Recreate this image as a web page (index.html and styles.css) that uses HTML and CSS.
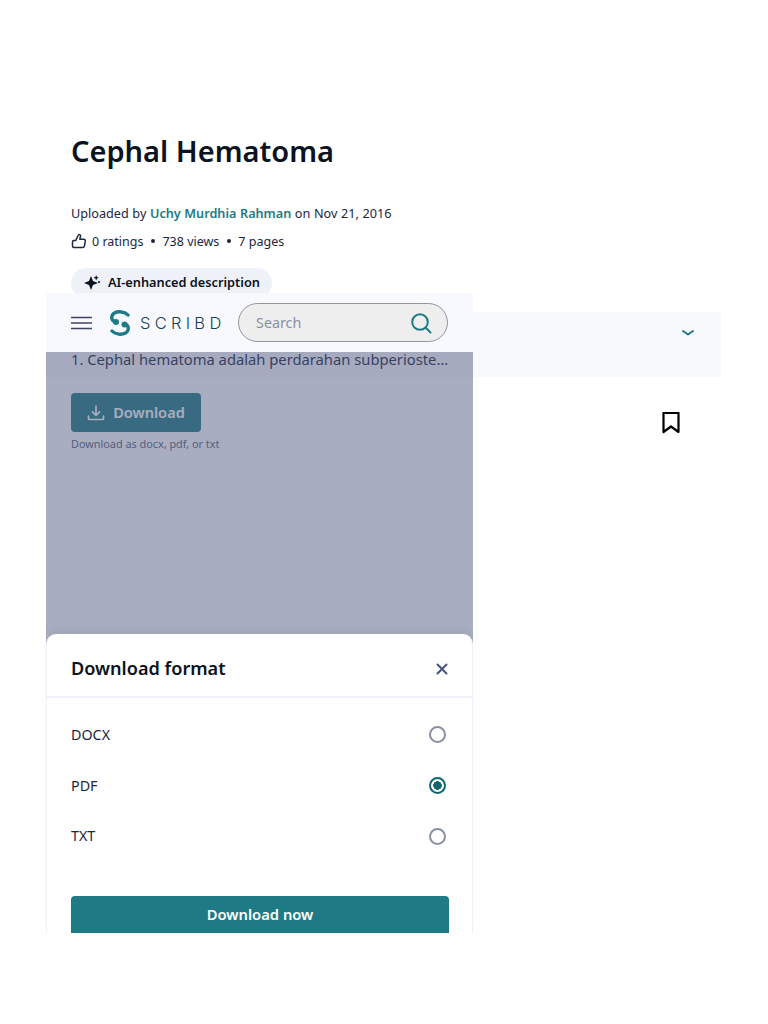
FILE: index.html
```html
<!DOCTYPE html>
<html lang="en">
<head>
<meta charset="utf-8">
<title>Cephal Hematoma</title>
<link rel="stylesheet" href="styles.css">
</head>
<body>
<main class="doc">
  <h1 class="title">Cephal Hematoma</h1>
  <p class="byline">Uploaded by <a class="author">Uchy Murdhia Rahman</a> on Nov 21, 2016</p>
  <div class="stats">
    <svg class="thumb" viewBox="0 0 16 16" width="16" height="16" fill="none" stroke="#1c263d" stroke-width="1.500" stroke-linejoin="round" stroke-linecap="round"><path d="M4.800 7.500 7.200 2.300c.3-.7 1-1 1.600-.7.700.3.900 1 .7 1.700L8.800 6.200h3.900c1.100 0 1.800.9 1.600 1.900l-.9 5c-.2.800-.8 1.400-1.600 1.400H3c-.8 0-1.500-.7-1.500-1.500V9c0-.8.700-1.500 1.500-1.500z"/></svg>
    <span>0 ratings</span><span class="dot"></span><span>738 views</span><span class="dot"></span><span>7 pages</span>
  </div>
  <div class="pill">
    <svg viewBox="0 0 18 18" width="18" height="18" fill="#0b1220"><path d="M8 2 10 7 15 9 10 11 8 16 6 11 1 9 6 7z"/><path d="M13.200 1l.8 2 2 .8-2 .8-.8 2-.8-2-2-.8 2-.8z"/><circle cx="16" cy="8" r="1.100"/></svg>
    <span>AI-enhanced description</span>
  </div>
  <section class="band">
    <p class="summary">1. Cephal hematoma adalah perdarahan subperioste…</p>
    <svg class="chevron" viewBox="0 0 14 8" width="14" height="8" fill="none" stroke="#1e7b85" stroke-width="2" stroke-linecap="round" stroke-linejoin="round"><path d="M2 2l5 3.500L12 2"/></svg>
  </section>
  <div class="actions">
    <div>
      <button class="download">
        <svg viewBox="0 0 18 18" width="18" height="18" fill="none" stroke="#fff" stroke-width="1.700" stroke-linecap="round" stroke-linejoin="round"><path d="M9 2v9M5.500 7.800 9 11.300l3.500-3.500M1.500 12v2.500c0 .6.400 1 1 1h13c.6 0 1-.4 1-1V12"/></svg>
        <span class="download-label">Download</span>
      </button>
      <p class="hint">Download as docx, pdf, or txt</p>
    </div>
    <svg class="bookmark" viewBox="0 0 18 22" width="18" height="22" fill="none" stroke="#000" stroke-width="2.200" stroke-linejoin="round"><path d="M1.500 1h15v19L9 14.500 1.500 20z"/></svg>
  </div>
</main>

<aside class="panel">
  <header class="topbar">
    <svg class="menu" viewBox="0 0 22 14" width="22" height="14" fill="none" stroke="#3b4565" stroke-width="1.700"><path d="M0 1.500h21M0 7h21M0 12.500h21"/></svg>
    <div class="logo">
      <svg viewBox="0 0 22 26" width="22" height="26" fill="none" stroke="#1e7b85" stroke-width="3.400" stroke-linecap="round"><path d="M19 5C16 1.500 9 1 5.500 3 2 5 1.800 9.500 5 11.500"/><path d="M3 21C6 24.500 13 25 16.500 23 20 21 20.200 16.500 17 14.500"/><circle cx="7" cy="12" r="3" fill="#1e7b85" stroke="none"/><circle cx="15.500" cy="14.500" r="3" fill="#1e7b85" stroke="none"/></svg>
      <span class="wordmark">SCRIBD</span>
    </div>
    <div class="search">
      <span>Search</span>
      <svg viewBox="0 0 22 22" width="22" height="22" fill="none" stroke="#1e7b85" stroke-width="2" stroke-linecap="round"><circle cx="10" cy="10" r="7.800"/><path d="M15.800 15.800 20.500 20.500"/></svg>
    </div>
  </header>
  <div class="scrim"></div>
  <div class="sheet">
    <div class="sheet-head">
      <h2>Download format</h2>
      <svg viewBox="0 0 12 12" width="12" height="12" fill="none" stroke="#49537a" stroke-width="2" stroke-linecap="round"><path d="M1.500 1.500l9 9M10.500 1.500l-9 9"/></svg>
    </div>
    <ul class="options">
      <li><span>DOCX</span><i class="radio"></i></li>
      <li><span>PDF</span><i class="radio on"></i></li>
      <li><span>TXT</span><i class="radio"></i></li>
    </ul>
    <button class="now">Download now</button>
  </div>
</aside>
</body>
</html>
```
FILE: styles.css
```css
* { box-sizing: border-box; }
html, body { margin: 0; height: 1024px; overflow: hidden; background: #fff; }
body { font-family: "Noto Sans", "Open Sans", sans-serif; color: #1c263d; position: relative; }
p, h1, h2, ul { margin: 0; padding: 0; }

.doc { width: 675px; margin-left: 46px; padding-top: 131px; }
.title { margin-left: 25px; font-size: 29px; line-height: 40px; font-weight: 600; color: #0b1220; }
.byline { margin: 32px 0 0 25px; font-size: 12.660px; line-height: 20px; word-spacing: .3px; }
.author { color: #1e7b85; font-weight: 600; }
.stats { margin: 8px 0 0 25px; display: flex; align-items: center; height: 20px; font-size: 12.500px; }
.thumb { margin-right: 5px; }
.dot { width: 4px; height: 4px; border-radius: 50%; background: #1c263d; margin: 0 7.500px; }
.pill { margin: 17px 0 0 25px; width: 201px; height: 30px; border-radius: 15px; background: #eff1f8; display: flex; align-items: center; gap: 7px; padding-left: 12px; font-size: 12.750px; font-weight: 600; color: #0b1220; }
.pill span { margin-bottom: 2px; }

.band { margin-top: 14px; height: 65px; background: #f8f9fd; position: relative; display: flex; justify-content: space-between; padding: 37px 26px 0 25px; }
.summary { font-size: 14.750px; line-height: 20px; white-space: nowrap; }
.chevron { margin-top: -20px; }
.actions { display: flex; justify-content: space-between; align-items: flex-start; padding: 16px 41px 0 25px; }
.download { width: 130px; height: 39px; border: 0; border-radius: 4px; background: #1e7b85; color: #fff; font: 600 14.600px "Noto Sans", sans-serif; display: flex; align-items: center; justify-content: center; gap: 8px; }
.download-label { margin-bottom: 2px; }
.hint { margin-top: 4px; font-size: 10.850px; line-height: 16px; color: #57617f; }
.bookmark { margin-top: 19px; }

.panel { position: absolute; left: 46px; top: 293px; width: 427px; height: 640px; display: flex; flex-direction: column; }
.topbar { height: 59px; background: #f8f9fe; display: flex; align-items: center; padding: 0 25px; }
.menu { margin-right: 16px; }
.logo { display: flex; align-items: center; gap: 9px; width: 129px; }
.wordmark { font: 300 16.500px Inter, sans-serif; letter-spacing: 4.300px; color: #123f52; white-space: nowrap; }
.search { width: 211px; height: 39px; border: 1.500px solid #8f95a5; border-radius: 20px; background: #eee; display: flex; align-items: center; justify-content: space-between; padding: 0 15px 0 17.500px; color: #8a91a3; font-size: 14.300px; }
.scrim { flex: 1; margin-bottom: -10px; background: rgba(82, 92, 128, .5); }
.sheet { position: relative; height: 299px; background: #fff; border-radius: 10px 10px 0 0; border: 1px solid #f0f1f6; border-width: 0 1px; overflow: hidden; box-shadow: 0 -6px 8px -4px rgba(60, 70, 100, .1); }
.sheet-head { height: 64px; border-bottom: 2px solid #eff1f6; display: flex; justify-content: space-between; align-items: center; padding: 0 24px; }
.sheet-head h2 { margin-top: 5px; font-size: 18.100px; font-weight: 600; color: #0b1220; }
.sheet-head svg { margin-top: 8px; }
.options { list-style: none; padding: 11.500px 24px 0; }
.options li { height: 50.700px; display: flex; justify-content: space-between; align-items: center; font-size: 14.300px; color: #1c263d; }
.options span { margin-bottom: 1px; }
.radio { width: 17px; height: 17px; border-radius: 50%; border: 2px solid #8a91a6; margin-right: 2px; display: block; }
.radio.on { border-color: #0f666e; background: radial-gradient(circle, #0f666e 0 4px, #fff 4.500px); }
.now { display: block; margin: 34.500px 24px 0; padding-bottom: 3px; width: 378px; height: 38px; border: 0; border-radius: 4px 4px 0 0; background: #1e7b85; color: #fff; font: 600 14.750px "Noto Sans", sans-serif; }
```
